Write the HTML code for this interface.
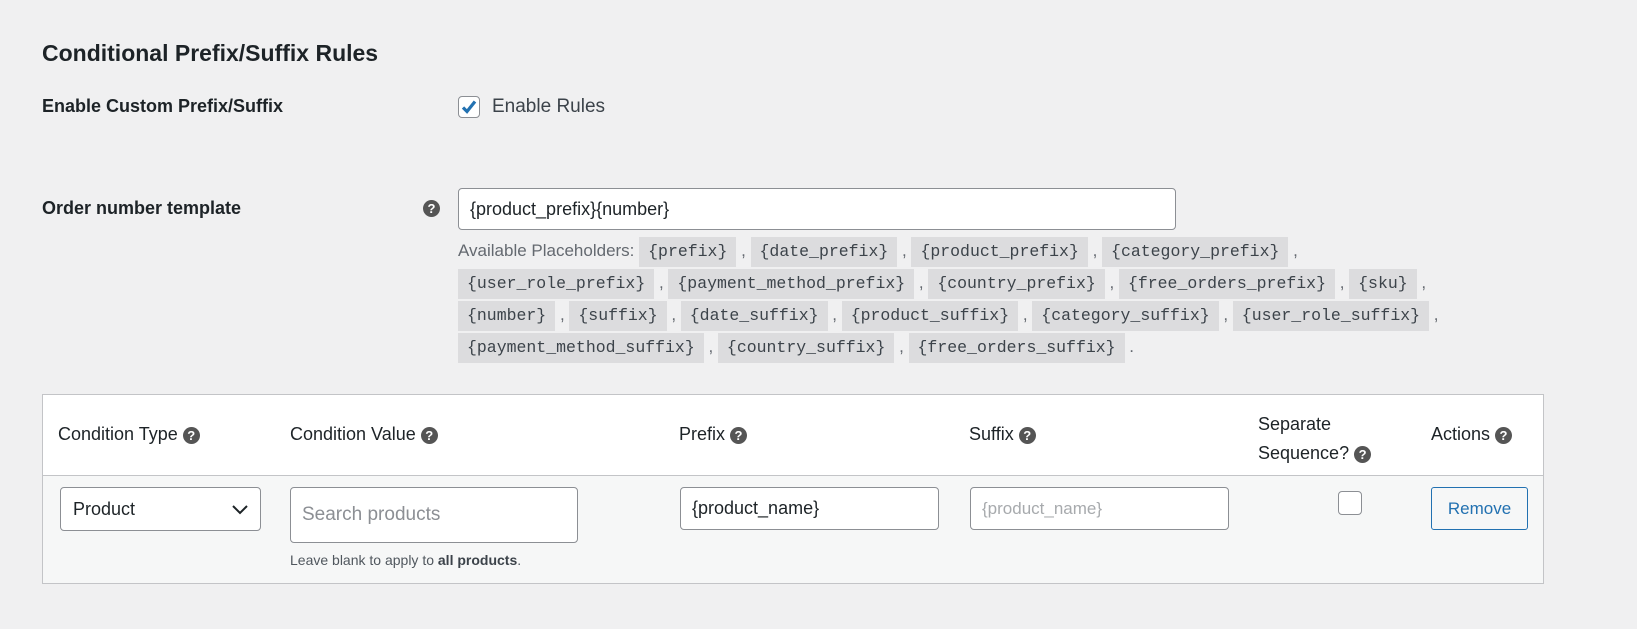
<!DOCTYPE html>
<html><head><style>
body{margin:0;width:1637px;height:629px;background:#f0f0f1;font-family:"Liberation Sans",sans-serif;color:#1d2327;position:relative;overflow:hidden}
.a{position:absolute;white-space:nowrap}
.h{width:17px;height:17px;border-radius:50%;background:#555;color:#fff;font-size:13px;font-weight:bold;text-align:center;line-height:17px;display:inline-block;vertical-align:middle}
.inp{position:absolute;background:#fff;border:1px solid #8c8f94;border-radius:4px;box-sizing:border-box;font-size:18px;padding-left:11px;display:flex;align-items:center}
.line{position:absolute;left:458px;font-size:17px;color:#646970;height:30px;line-height:30px;white-space:nowrap}
code{font-family:"Liberation Mono",monospace;background:#dcdcde;color:#3c434a;padding:0 9px;display:inline-block;height:30px;line-height:30px;font-size:16.5px}
.th{position:absolute;top:424px;font-size:18px;color:#1d2327;white-space:nowrap}
</style></head><body>
<div class="a" style="left:42px;top:40px;font-size:23px;font-weight:bold">Conditional Prefix/Suffix Rules</div>
<div class="a" style="left:42px;top:96px;font-size:18px;font-weight:bold">Enable Custom Prefix/Suffix</div>
<div class="a" style="left:458px;top:96px;width:22px;height:22px;border:1px solid #8c8f94;border-radius:4px;background:#fff;box-sizing:border-box"><svg width="20" height="20" viewBox="0 0 20 20" style="position:absolute;left:0;top:0"><path d="M4 10.5 L8 14.5 L16 4.5" fill="none" stroke="#2271b1" stroke-width="3.2"/></svg></div>
<div class="a" style="left:492px;top:96px;font-size:19px;color:#3c434a">Enable Rules</div>
<div class="a" style="left:42px;top:198px;font-size:18px;font-weight:bold">Order number template</div>
<div class="a" style="left:423px;top:200px"><span class="h">?</span></div>
<div class="inp" style="left:458px;top:188px;width:718px;height:42px">{product_prefix}{number}</div>
<div class="line" style="top:236px">Available Placeholders: <code>{prefix}</code> , <code>{date_prefix}</code> , <code>{product_prefix}</code> , <code>{category_prefix}</code> ,</div>
<div class="line" style="top:268px"><code>{user_role_prefix}</code> , <code>{payment_method_prefix}</code> , <code>{country_prefix}</code> , <code>{free_orders_prefix}</code> , <code>{sku}</code> ,</div>
<div class="line" style="top:300px"><code>{number}</code> , <code>{suffix}</code> , <code>{date_suffix}</code> , <code>{product_suffix}</code> , <code>{category_suffix}</code> , <code>{user_role_suffix}</code> ,</div>
<div class="line" style="top:332px"><code>{payment_method_suffix}</code> , <code>{country_suffix}</code> , <code>{free_orders_suffix}</code> .</div>
<div class="a" style="left:42px;top:394px;width:1502px;height:190px;border:1px solid #c3c4c7;box-sizing:border-box;background:#f6f7f7">
<div style="position:absolute;left:0;top:0;right:0;height:80px;background:#fff;border-bottom:1px solid #c3c4c7"></div>
</div>
<div class="th" style="left:58px">Condition Type <span class="h">?</span></div>
<div class="th" style="left:290px">Condition Value <span class="h">?</span></div>
<div class="th" style="left:679px">Prefix <span class="h">?</span></div>
<div class="th" style="left:969px">Suffix <span class="h">?</span></div>
<div class="th" style="left:1258px;top:410px;line-height:29px">Separate<br>Sequence? <span class="h">?</span></div>
<div class="th" style="left:1431px">Actions <span class="h">?</span></div>
<div class="inp" style="left:60px;top:487px;width:201px;height:44px;padding-left:12px">Product<svg width="16" height="10" style="position:absolute;right:12px;top:17px"><path d="M1 1 L8 8 L15 1" fill="none" stroke="#1d2327" stroke-width="2"/></svg></div>
<div class="inp" style="left:290px;top:487px;width:288px;height:56px;color:#8c8f94;font-size:19px">Search products</div>
<div class="a" style="left:290px;top:552px;font-size:14px;color:#50575e">Leave blank to apply to <b style="color:#3c434a">all products</b>.</div>
<div class="inp" style="left:680px;top:487px;width:259px;height:43px">{product_name}</div>
<div class="inp" style="left:970px;top:487px;width:259px;height:43px;color:#a7aaad;font-size:17px">{product_name}</div>
<div class="a" style="left:1338px;top:491px;width:24px;height:24px;border:1px solid #8c8f94;border-radius:4px;background:#fff;box-sizing:border-box"></div>
<div class="a" style="left:1431px;top:487px;width:97px;height:43px;border:1px solid #2271b1;border-radius:3px;box-sizing:border-box;background:#f6f7f7;color:#2271b1;font-size:17px;text-align:center;line-height:41px">Remove</div>
</body></html>
